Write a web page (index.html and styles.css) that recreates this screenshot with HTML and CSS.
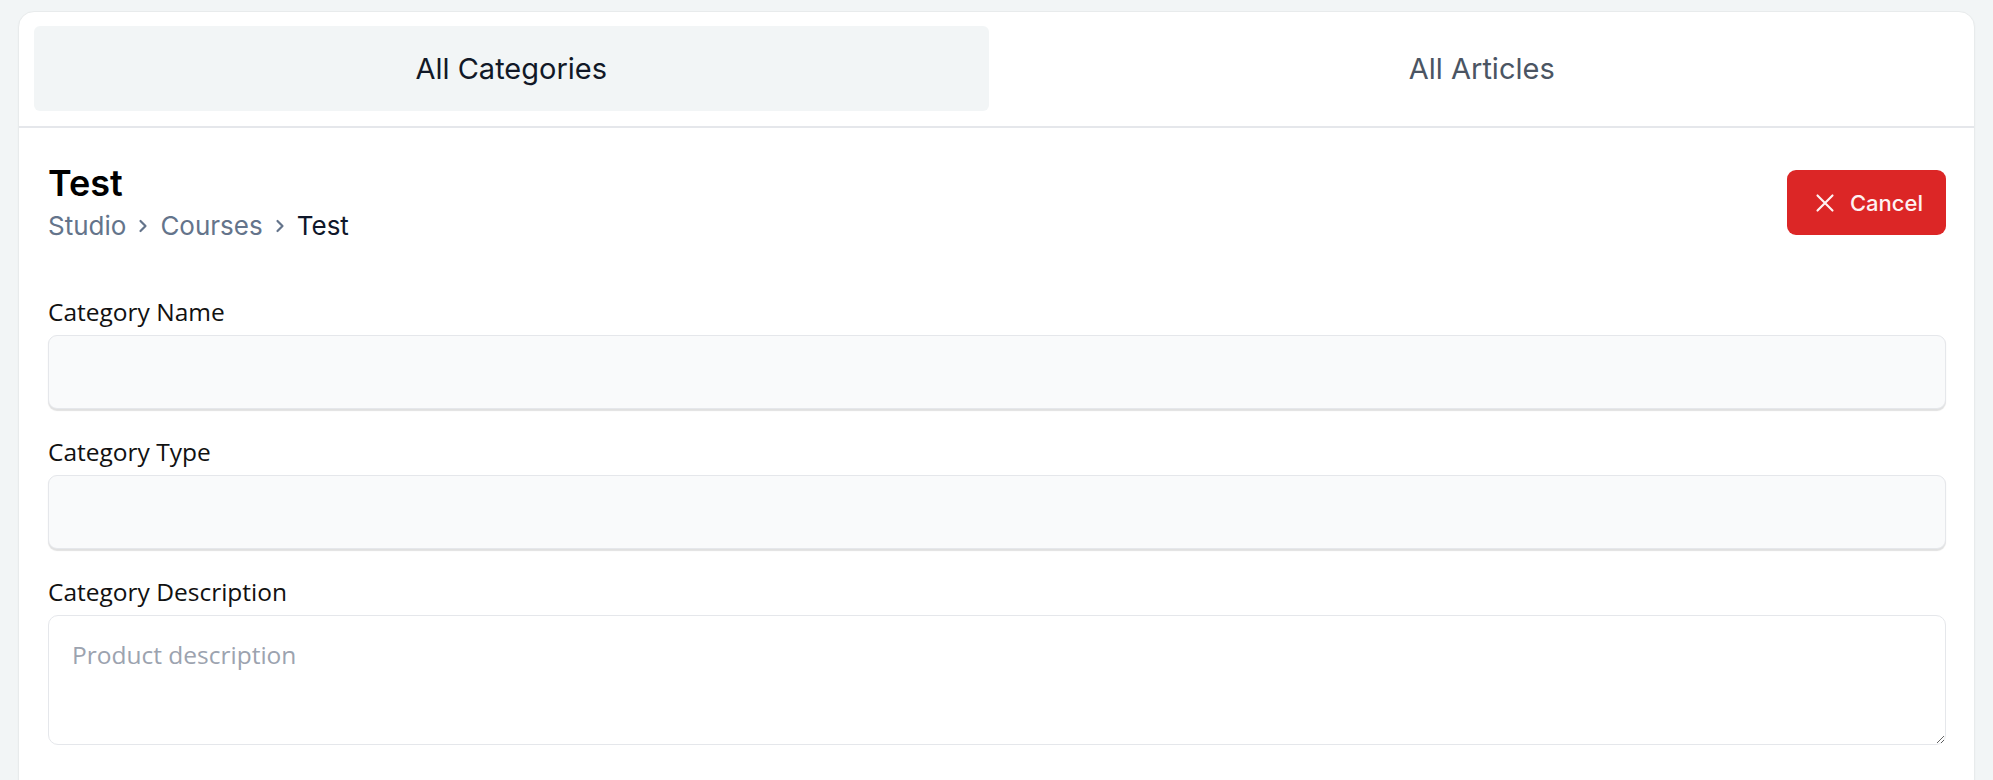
FILE: index.html
```html
<!DOCTYPE html>
<html lang="en">
<head>
<meta charset="utf-8">
<title>Category</title>
<link rel="stylesheet" href="styles.css">
</head>
<body>
<div class="card">
  <nav class="tabs">
    <button class="tab tab-active" type="button">All Categories</button>
    <button class="tab" type="button">All Articles</button>
  </nav>
  <div class="content">
    <div class="header">
      <div class="titles">
        <h1 class="title">Test</h1>
        <div class="crumbs">
          <a class="crumb-link">Studio</a>
          <svg class="chev" viewBox="0 0 10 14" width="10" height="14"><path d="M2.5 2 7.5 7l-5 5" fill="none" stroke="currentColor" stroke-width="2.2" stroke-linecap="round" stroke-linejoin="round"/></svg>
          <a class="crumb-link">Courses</a>
          <svg class="chev" viewBox="0 0 10 14" width="10" height="14"><path d="M2.5 2 7.5 7l-5 5" fill="none" stroke="currentColor" stroke-width="2.2" stroke-linecap="round" stroke-linejoin="round"/></svg>
          <span class="crumb-current">Test</span>
        </div>
      </div>
      <button class="cancel" type="button">
        <svg class="cancel-icon" viewBox="0 0 24 24" width="30" height="30"><path d="M18 6 6 18M6 6l12 12" fill="none" stroke="currentColor" stroke-width="1.7" stroke-linecap="round"/></svg>
        <span>Cancel</span>
      </button>
    </div>
    <form class="form">
      <div class="field">
        <label class="label">Category Name</label>
        <input class="input" type="text">
      </div>
      <div class="field">
        <label class="label">Category Type</label>
        <input class="input" type="text">
      </div>
      <div class="field">
        <label class="label">Category Description</label>
        <textarea class="textarea" placeholder="Product description"></textarea>
      </div>
    </form>
  </div>
</div>
</body>
</html>
```
FILE: styles.css
```css
* { box-sizing: border-box; }
html, body { margin: 0; padding: 0; }
body {
  background: #f2f5f6;
  padding: 11px 18px 0 18px;
  font-family: Inter, "Liberation Sans", sans-serif;
  overflow: hidden;
}
.card {
  background: #ffffff;
  border: 1px solid #e8ebec;
  border-radius: 16px;
  min-height: 900px;
  box-shadow: 0 1px 2px rgba(0,0,0,0.04);
}
.tabs {
  display: grid;
  grid-template-columns: 1fr 1fr;
  gap: 16px;
  padding: 14px 15px 15px 15px;
  border-bottom: 2px solid #e5e7eb;
}
.tab {
  height: 85px;
  border: none;
  background: transparent;
  border-radius: 6px;
  font-family: Inter, "Liberation Sans", sans-serif;
  font-size: 29px;
  font-weight: 400;
  color: #4b5563;
  cursor: pointer;
}
.tab-active {
  background: #f2f5f6;
  color: #111827;
}
.content {
  padding: 35px 28px 0 29px;
}
.header {
  display: flex;
  align-items: center;
  justify-content: space-between;
  margin-bottom: 54px;
}
.titles {
  display: flex;
  flex-direction: column;
  gap: 7px;
}
.title {
  margin: 0;
  font-size: 36px;
  line-height: 40px;
  font-weight: 600;
  color: #000000;
}
.crumbs {
  display: flex;
  align-items: center;
  gap: 12px;
  font-size: 26px;
  line-height: 32px;
  color: #64748b;
}
.crumb-link { color: #64748b; }
.chev { color: #64748b; display: block; }
.crumb-current { color: #0f172a; }
.cancel {
  display: flex;
  align-items: center;
  gap: 10px;
  height: 65px;
  padding: 0 23px;
  border: none;
  border-radius: 9px;
  background: #dc2626;
  color: #fef2f2;
  font-family: Inter, "Liberation Sans", sans-serif;
  font-size: 22px;
  font-weight: 500;
  cursor: pointer;
}
.cancel-icon { display: block; }
.form {
  display: flex;
  flex-direction: column;
  gap: 27px;
}
.field {
  display: flex;
  flex-direction: column;
  gap: 7px;
}
.label {
  font-family: "Open Sans", "Noto Sans", sans-serif;
  font-size: 24.5px;
  line-height: 32px;
  color: #111111;
}
.input {
  height: 74px;
  width: 100%;
  background: #f9fafb;
  border: 1px solid #e5e7eb;
  border-radius: 9px;
  box-shadow: 0 1.5px 1px rgba(0,0,0,0.12);
  font-family: "Open Sans", "Noto Sans", sans-serif;
  font-size: 24px;
  padding: 0 24px;
}
.textarea {
  height: 130px;
  width: 100%;
  background: #ffffff;
  border: 1px solid #e5e7eb;
  border-radius: 10px;
  font-family: "Open Sans", "Noto Sans", sans-serif;
  font-size: 24.5px;
  line-height: 32px;
  padding: 23px 23px;
  resize: vertical;
}
.textarea::placeholder { color: #9ca3af; }
```
